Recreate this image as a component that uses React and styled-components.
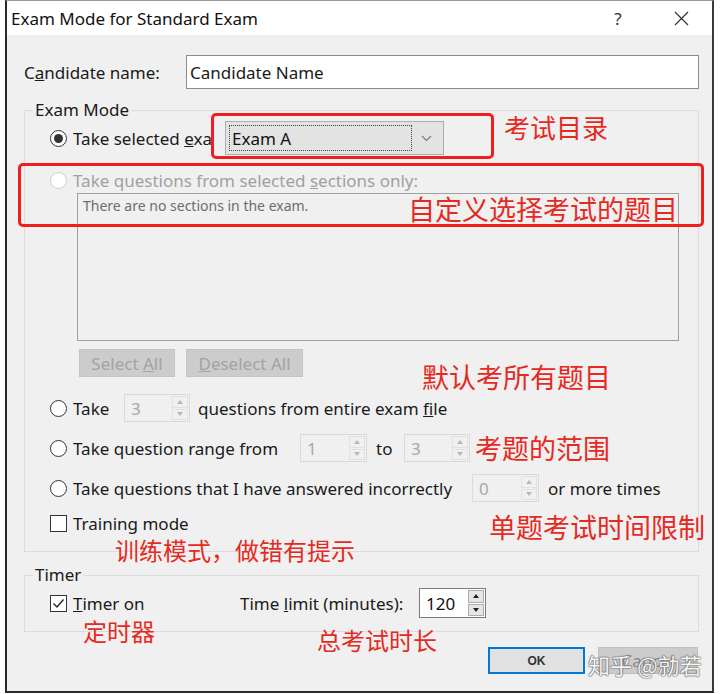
import React from 'react';
import styled, { createGlobalStyle, css } from 'styled-components';

const GlobalStyle = createGlobalStyle`
    html, body {
        margin : 0 ;
        padding : 0 ;
        background : #ffffff ;
    }
    body {
        font-family : "Noto Sans", "Open Sans", sans-serif ;
        color : #1a1a1a ;
    }
`;

const UI = `"Noto Sans", "Open Sans", sans-serif`;
const CJK = `"Noto Sans CJK SC", "Noto Sans", sans-serif`;

// dialog window
const Window = styled.div`
    position : relative ;
    box-sizing : border-box ;
    margin-left : 5px ;
    width : 709px ;
    height : 693px ;
    background : #f0f0f0 ;
    border-top : 1px solid #9a9a9a ;
    border-left : 2px solid #2a2a2a ;
    border-right : 2px solid #3a3a3a ;
    border-bottom : 2px solid #2a2a2a ;
    display : flex ;
    flex-direction : column ;
`;

const TitleBar = styled.div`
    height : 34px ;
    flex-shrink : 0 ;
    background : #ffffff ;
    display : flex ;
    align-items : center ;
    padding : 0 8px 0 4px ;
    font-family : ${UI} ;
    font-size : 17px ;
    color : #111 ;
`;

const TitleButtons = styled.div`
    margin-left : auto ;
    display : flex ;
    gap : 17px ;
`;

const TitleButton = styled.div`
    width : 46px ;
    height : 30px ;
    display : flex ;
    align-items : center ;
    justify-content : center ;
    font-size : 17px ;
    color : #333 ;
`;

const Body = styled.div`
    padding : 0 13px 0 17px ;
    display : flex ;
    flex-direction : column ;
    font-family : ${UI} ;
    font-size : 17px ;
`;

const NameRow = styled.div`
    margin-top : 20px ;
    height : 34px ;
    display : flex ;
    align-items : center ;
`;

const NameLabel = styled.div`
    width : 162px ;
    flex-shrink : 0 ;
`;

const TextInput = styled.div`
    flex : 1 ;
    box-sizing : border-box ;
    height : 34px ;
    background : #ffffff ;
    border : 1px solid #8c8c8c ;
    padding-left : 3px ;
    display : flex ;
    align-items : center ;
`;

const Group = styled.fieldset`
    margin : ${p => p.$top}px 0 0 0 ;
    padding : 0 ;
    min-width : 0 ;
    border : 1px solid #dcdcdc ;
`;

const Legend = styled.legend`
    margin-left : 8px ;
    padding : 0 2px ;
    line-height : 18px ;
    font-size : 17px ;
`;

const GroupBody = styled.div`
    display : flex ;
    flex-direction : column ;
    padding : 0 0 ${p => p.$bottom}px 25px ;
`;

const Row = styled.div`
    display : flex ;
    align-items : center ;
    white-space : nowrap ;
    margin-top : ${p => p.$top}px ;
    height : ${p => p.$h}px ;
    color : ${p => (p.$disabled ? '#a0a0a0' : '#1a1a1a')} ;
`;

const Label = styled.div`
    width : ${p => p.$w}px ;
    flex-shrink : 0 ;
    overflow : hidden ;
    white-space : nowrap ;
`;

const Text = styled.span`
    margin-left : ${p => p.$left || 0}px ;
    width : ${p => (p.$w ? `${p.$w}px` : 'auto')} ;
    flex-shrink : 0 ;
`;

const Radio = styled.span`
    box-sizing : border-box ;
    width : 17px ;
    height : 17px ;
    flex-shrink : 0 ;
    margin-right : 6px ;
    border-radius : 50% ;
    background : #ffffff ;
    border : 1px solid ${p => (p.$disabled ? '#cfcfcf' : '#333333')} ;
    display : flex ;
    align-items : center ;
    justify-content : center ;

    ${p => p.$checked && css`
        &::after {
            content : '' ;
            width : 9px ;
            height : 9px ;
            border-radius : 50% ;
            background : #333333 ;
        }
    `}
`;

const Check = styled.span`
    box-sizing : border-box ;
    width : 17px ;
    height : 17px ;
    flex-shrink : 0 ;
    margin-right : 6px ;
    background : #ffffff ;
    border : 1px solid #333333 ;
    display : flex ;
    align-items : center ;
    justify-content : center ;
`;

const Combo = styled.div`
    box-sizing : border-box ;
    width : 219px ;
    height : 34px ;
    margin-left : 13px ;
    padding : 3px ;
    background : #e3e3e3 ;
    border : 1px solid #adadad ;
    display : flex ;
    align-items : center ;
`;

const ComboFocus = styled.div`
    box-sizing : border-box ;
    flex : 1 ;
    height : 100% ;
    border : 1px dotted #444 ;
    padding-left : 2px ;
    display : flex ;
    align-items : center ;
    color : #111 ;
`;

const ComboArrow = styled.div`
    width : 28px ;
    display : flex ;
    justify-content : center ;
`;

const ListBox = styled.div`
    box-sizing : border-box ;
    margin : 1px 19px 0 27px ;
    height : 148px ;
    border : 1px solid #a0a0a0 ;
    background : #f0f0f0 ;
    padding : 2px 5px ;
    font-size : 14px ;
    color : #6d6d6d ;
`;

const ButtonRow = styled.div`
    display : flex ;
    gap : 11px ;
    margin : 8px 0 0 29px ;
    height : 28px ;
`;

const FlatButton = styled.div`
    box-sizing : border-box ;
    width : ${p => p.$w}px ;
    height : 100% ;
    display : flex ;
    align-items : center ;
    justify-content : center ;
    background : #cccccc ;
    border : 1px solid #c4c4c4 ;
    color : #a3a3a3 ;
`;

const SpinBox = styled.div`
    box-sizing : border-box ;
    width : ${p => p.$w}px ;
    height : ${p => p.$h}px ;
    flex-shrink : 0 ;
    display : flex ;
    background : ${p => (p.$disabled ? '#f0f0f0' : '#ffffff')} ;
    border : 1px solid ${p => (p.$disabled ? '#dadada' : '#7a7a7a')} ;
`;

const SpinValue = styled.div`
    flex : 1 ;
    display : flex ;
    align-items : center ;
    padding-left : 6px ;
    color : ${p => (p.$disabled ? '#a8a8a8' : '#111')} ;
`;

const SpinButtons = styled.div`
    width : 16px ;
    display : flex ;
    flex-direction : column ;
    margin : 1px 1px 1px 0 ;
    gap : 1px ;
`;

const SpinButton = styled.div`
    flex : 1 ;
    display : flex ;
    align-items : center ;
    justify-content : center ;
    background : ${p => (p.$disabled ? '#f0f0f0' : '#e6e6e6')} ;
    border : 1px solid ${p => (p.$disabled ? '#e2e2e2' : '#adadad')} ;
`;

const Arrow = styled.span`
    width : 0 ;
    height : 0 ;
    border-left : 3.5px solid transparent ;
    border-right : 3.5px solid transparent ;
    ${p => (p.$down ? 'border-top' : 'border-bottom')} : 4px solid ${p => (p.$disabled ? '#b8b8b8' : '#222')} ;
`;

const Footer = styled.div`
    margin-top : 15px ;
    display : flex ;
    justify-content : flex-end ;
    gap : 13px ;
    padding-right : 1px ;
    height : 27px ;
`;

const DialogButton = styled.div`
    box-sizing : border-box ;
    width : ${p => p.$w}px ;
    height : 100% ;
    display : flex ;
    align-items : center ;
    justify-content : center ;
    ${p => (p.$primary
        ? css`
            background : #e1e1e1 ;
            border : 2px solid #0078d7 ;
            font-family : "Liberation Sans", sans-serif ;
            font-weight : bold ;
            font-size : 12px ;
            color : #333 ;
        `
        : css`
            background : #cccccc ;
            border : 1px solid #bfbfbf ;
            color : #8a8a8a ;
        `)}
`;

// annotations drawn over the screenshot
const RedBox = styled.div`
    position : absolute ;
    box-sizing : border-box ;
    left : ${p => p.$x}px ;
    top : ${p => p.$y}px ;
    width : ${p => p.$w}px ;
    height : ${p => p.$h}px ;
    border : 3px solid #f01e1e ;
    border-radius : 5px ;
`;

const Note = styled.div`
    position : absolute ;
    left : ${p => p.$x}px ;
    top : ${p => p.$y}px ;
    font-family : ${CJK} ;
    font-size : ${p => p.$size}px ;
    line-height : 1 ;
    white-space : nowrap ;
    color : #e52a23 ;
`;

const Watermark = styled.div`
    position : absolute ;
    left : 581px ;
    top : 652px ;
    font-family : ${CJK} ;
    font-size : 22px ;
    line-height : 1 ;
    white-space : nowrap ;
    color : #f6f6f6 ;
    text-shadow : 0 0 1px #555, 0 0 1px #555, 0 0 2px #777 ;
`;

const Spinner = ({ value, w = 67, h = 28, disabled = true }) => (
    <SpinBox $w={w} $h={h} $disabled={disabled}>
        <SpinValue $disabled={disabled}>{value}</SpinValue>
        <SpinButtons>
            <SpinButton $disabled={disabled}><Arrow $disabled={disabled} /></SpinButton>
            <SpinButton $disabled={disabled}><Arrow $down $disabled={disabled} /></SpinButton>
        </SpinButtons>
    </SpinBox>
);

const notes = [
    { text : '考试目录', x : 497, y : 113, size : 26 },
    { text : '自定义选择考试的题目', x : 401, y : 194, size : 27 },
    { text : '默认考所有题目', x : 415, y : 362, size : 27 },
    { text : '考题的范围', x : 468, y : 433, size : 27 },
    { text : '单题考试时间限制', x : 482, y : 512, size : 27 },
    { text : '训练模式，做错有提示', x : 108, y : 537, size : 24 },
    { text : '定时器', x : 76, y : 618, size : 24 },
    { text : '总考试时长', x : 310, y : 627, size : 24 },
];

const App = () => (
    <>
        <GlobalStyle />
        <Window>
            <TitleBar>
                <span>Exam Mode for Standard Exam</span>
                <TitleButtons>
                    <TitleButton>?</TitleButton>
                    <TitleButton>
                        <svg width="15" height="15" viewBox="0 0 15 15">
                            <path d="M1 1 L14 14 M14 1 L1 14" stroke="#333" strokeWidth="1.2" fill="none" />
                        </svg>
                    </TitleButton>
                </TitleButtons>
            </TitleBar>
            <Body>
                <NameRow>
                    <NameLabel>C<u>a</u>ndidate name:</NameLabel>
                    <TextInput>Candidate Name</TextInput>
                </NameRow>

                <Group $top={12}>
                    <Legend>Exam Mode</Legend>
                    <GroupBody $bottom={16}>
                        <Row $top={1} $h={36}>
                            <Radio $checked />
                            <Label $w={139}>Take selected <u>e</u>xam:</Label>
                            <Combo>
                                <ComboFocus>Exam A</ComboFocus>
                                <ComboArrow>
                                    <svg width="11" height="7" viewBox="0 0 11 7">
                                        <path d="M1 1 L5.5 5.5 L10 1" stroke="#7a7a7a" strokeWidth="1.1" fill="none" />
                                    </svg>
                                </ComboArrow>
                            </Combo>
                        </Row>
                        <Row $top={12} $h={24} $disabled>
                            <Radio $disabled />
                            <span>Take questions from selected <u>s</u>ections only:</span>
                        </Row>
                        <ListBox>There are no sections in the exam.</ListBox>
                        <ButtonRow>
                            <FlatButton $w={96}><span>Select <u>A</u>ll</span></FlatButton>
                            <FlatButton $w={117}><span><u>D</u>eselect All</span></FlatButton>
                        </ButtonRow>
                        <Row $top={17} $h={28}>
                            <Radio />
                            <Label $w={51}>Take</Label>
                            <Spinner value="3" w={66} />
                            <Text $left={8}>questions from entire exam <u>f</u>ile</Text>
                        </Row>
                        <Row $top={12} $h={28}>
                            <Radio />
                            <Label $w={227}>Take question range from</Label>
                            <Spinner value="1" />
                            <Text $left={9} $w={28}>to</Text>
                            <Spinner value="3" w={66} />
                        </Row>
                        <Row $top={12} $h={28}>
                            <Radio />
                            <Label $w={399}>Take questions that I have answered incorrectly</Label>
                            <Spinner value="0" />
                            <Text $left={9}>or more times</Text>
                        </Row>
                        <Row $top={9} $h={24}>
                            <Check />
                            <span>Training mode</span>
                        </Row>
                    </GroupBody>
                </Group>

                <Group $top={14}>
                    <Legend>Timer</Legend>
                    <GroupBody $bottom={13}>
                        <Row $top={4} $h={30}>
                            <Label $w={190}>
                                <Row $top={0} $h={30}>
                                    <Check>
                                        <svg width="13" height="13" viewBox="0 0 13 13">
                                            <path d="M1.5 6.5 L5 10 L11.5 2.5" stroke="#222" strokeWidth="1.4" fill="none" />
                                        </svg>
                                    </Check>
                                    <span><u>T</u>imer on</span>
                                </Row>
                            </Label>
                            <Label $w={179}>Time <u>l</u>imit (minutes):</Label>
                            <Spinner value="120" h={30} disabled={false} />
                        </Row>
                    </GroupBody>
                </Group>

                <Footer>
                    <DialogButton $w={97} $primary>OK</DialogButton>
                    <DialogButton $w={100}>Cancel</DialogButton>
                </Footer>
            </Body>

            <RedBox $x={204} $y={112} $w={283} $h={46} />
            <RedBox $x={11} $y={162} $w={686} $h={64} />
            {notes.map(note => (
                <Note key={note.text} $x={note.x} $y={note.y} $size={note.size}>
                    {note.text}
                </Note>
            ))}
            <Watermark>知乎 @勍若</Watermark>
        </Window>
    </>
);

export default App;
